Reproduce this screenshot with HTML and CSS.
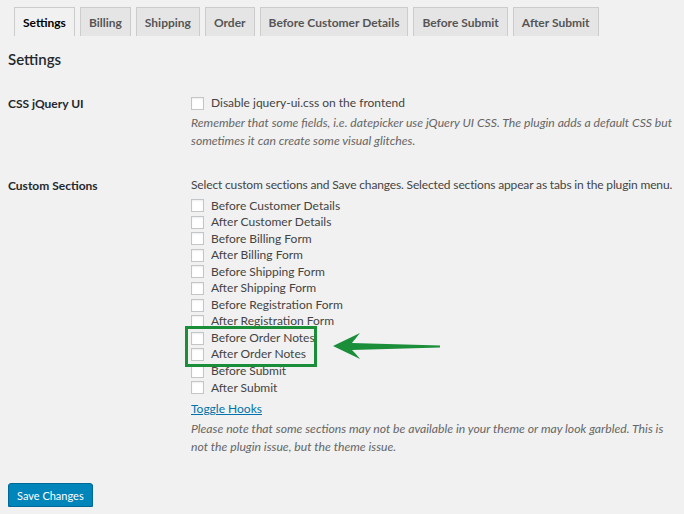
FILE: index.html
```html
<!DOCTYPE html>
<html lang="en">
  <head>
    <meta charset="UTF-8">
    <meta name="viewport" content="width=device-width, initial-scale=1.0">
    <title>Checkout Field Editor - Settings</title>
    <link rel="stylesheet" href="styles.css">
  </head>
  <body>
    <div class="wrap">
      <nav class="nav-tabs">
        <a class="nav-tab active">Settings</a>
        <a class="nav-tab">Billing</a>
        <a class="nav-tab">Shipping</a>
        <a class="nav-tab">Order</a>
        <a class="nav-tab">Before Customer Details</a>
        <a class="nav-tab">Before Submit</a>
        <a class="nav-tab">After Submit</a>
      </nav>

      <h2>Settings</h2>

      <div class="form-row first-row">
        <div class="row-label">CSS jQuery UI</div>
        <div class="row-field">
          <label class="check"><input type="checkbox"> Disable jquery-ui.css on the frontend</label>
          <p class="description">Remember that some fields, i.e. datepicker use jQuery UI CSS. The plugin adds a default CSS but sometimes it can create some visual glitches.</p>
        </div>
      </div>

      <div class="form-row">
        <div class="row-label">Custom Sections</div>
        <div class="row-field">
          <p class="lead">Select custom sections and Save changes. Selected sections appear as tabs in the plugin menu.</p>
          <div class="section-list">
            <label class="check"><input type="checkbox"> Before Customer Details</label>
            <label class="check"><input type="checkbox"> After Customer Details</label>
            <label class="check"><input type="checkbox"> Before Billing Form</label>
            <label class="check"><input type="checkbox"> After Billing Form</label>
            <label class="check"><input type="checkbox"> Before Shipping Form</label>
            <label class="check"><input type="checkbox"> After Shipping Form</label>
            <label class="check"><input type="checkbox"> Before Registration Form</label>
            <label class="check"><input type="checkbox"> After Registration Form</label>
            <label class="check"><input type="checkbox"> Before Order Notes</label>
            <label class="check"><input type="checkbox"> After Order Notes</label>
            <label class="check"><input type="checkbox"> Before Submit</label>
            <label class="check"><input type="checkbox"> After Submit</label>

            <div class="highlight"></div>
            <svg class="arrow" width="112" height="30" viewBox="0 0 112 30">
              <path d="M0 13 L27 0 C24 4 21 7 19 10 L107 12.6 L107 14.4 L19 17 C21 19 24 22 27 26 Z" fill="#1b8e3a"/>
            </svg>
          </div>
          <a class="toggle-link" href="#">Toggle Hooks</a>
          <p class="description">Please note that some sections may not be available in your theme or may look garbled. This is not the plugin issue, but the theme issue.</p>
        </div>
      </div>

      <button class="button-primary">Save Changes</button>
    </div>
  </body>
</html>
```

FILE: styles.css
```css
body, html {
  margin: 0;
  padding: 0;
  background-color: #f1f1f1;
  font-family: 'Lato', 'Liberation Sans', sans-serif;
  font-size: 12px;
  color: #444;
}

.wrap {
  padding: 7px 8px 0 8px;
}

.nav-tabs {
  display: flex;
  gap: 5px;
  padding-left: 6px;
  height: 29px;
}

.nav-tab {
  display: block;
  box-sizing: border-box;
  height: 29px;
  line-height: 29px;
  padding: 0 8px;
  border: 1px solid #ccc;
  border-bottom: none;
  background-color: #e5e5e5;
  color: #555;
  font-weight: bold;
  font-size: 12px;
  text-decoration: none;
}

.nav-tab.active {
  background-color: #f1f1f1;
  color: #000;
}

h2 {
  margin: 13px 0 0 0;
  font-size: 15px;
  font-weight: 600;
  color: #23282d;
  line-height: 20px;
}

.form-row {
  display: grid;
  grid-template-columns: 183px 1fr;
}

.first-row {
  margin-top: 25px;
}

.form-row + .form-row {
  margin-top: 26px;
}

.row-label {
  font-weight: bold;
  color: #23282d;
  line-height: 18px;
  padding-top: 1px;
}

.check {
  display: flex;
  align-items: center;
  gap: 7px;
  line-height: 16.55px;
  color: #444;
}

.first-row .check {
  line-height: 18px;
}

.check input {
  appearance: none;
  margin: 0;
  width: 13px;
  height: 13px;
  background-color: #fff;
  border: 1px solid #c3c6c9;
  box-shadow: inset 0 1px 2px rgba(0, 0, 0, 0.07);
  flex: none;
}

.description {
  margin: 2px 0 0 0;
  font-style: italic;
  color: #666;
  line-height: 18px;
  font-size: 12.2px;
}

.lead {
  margin: 0 0 3.5px 0;
  line-height: 18px;
  white-space: nowrap;
  letter-spacing: -0.15px;
}

.section-list {
  position: relative;
}

.highlight {
  position: absolute;
  left: -6px;
  top: 128px;
  width: 126px;
  height: 35px;
  border: 3px solid #1b8e3a;
}

.arrow {
  position: absolute;
  left: 142px;
  top: 135px;
}

.toggle-link {
  display: inline-block;
  margin-top: 4px;
  color: #0073aa;
  line-height: 18px;
}

.button-primary {
  display: block;
  margin-top: 27px;
  height: 24px;
  padding: 0 8px;
  background-color: #0085ba;
  border: 1px solid #006799;
  border-radius: 3px;
  box-shadow: 0 1px 0 #006799;
  color: #fff;
  font-family: 'Lato', 'Liberation Sans', sans-serif;
  font-size: 11px;
}
```
